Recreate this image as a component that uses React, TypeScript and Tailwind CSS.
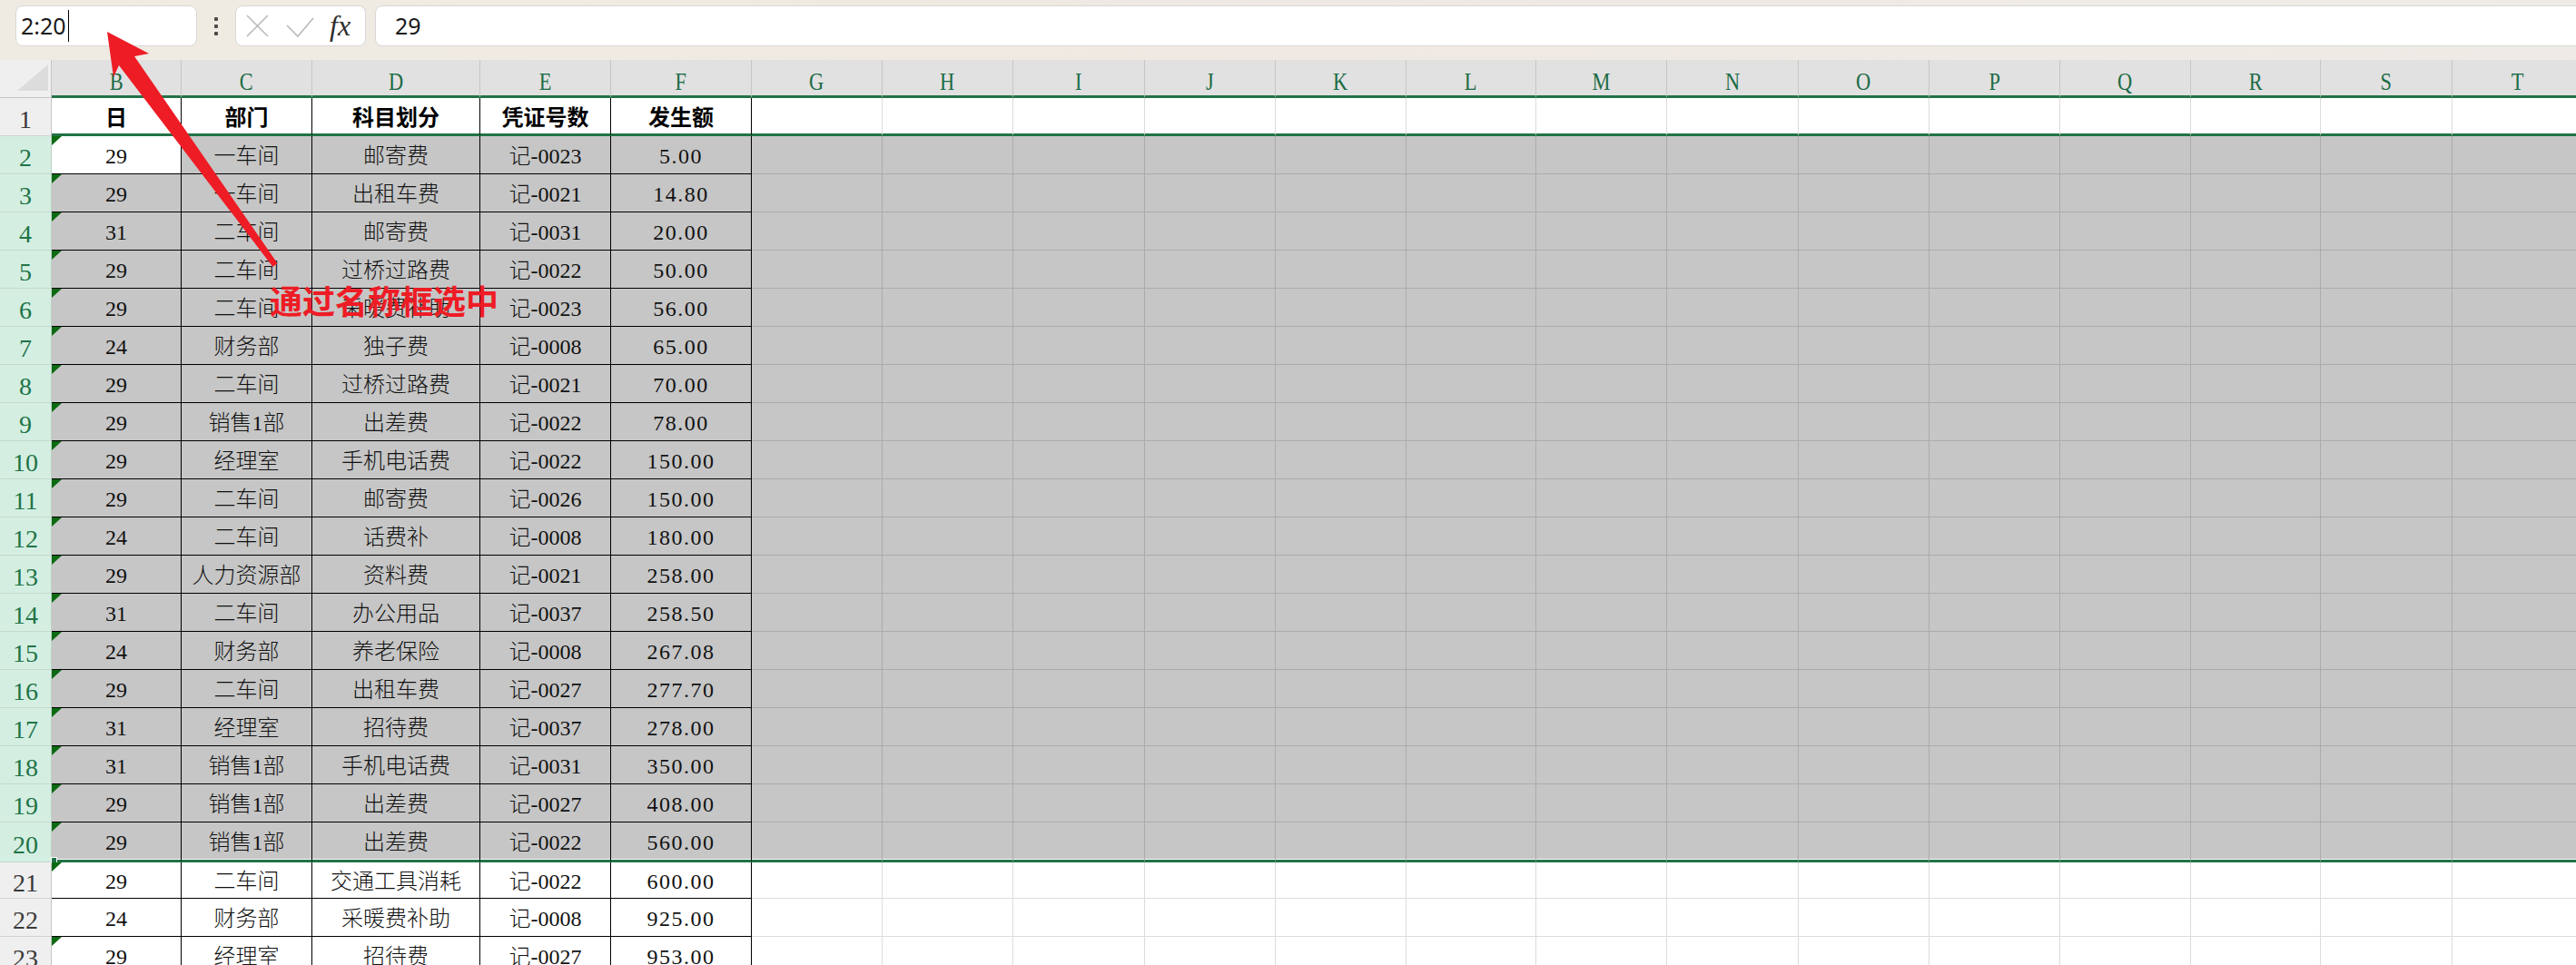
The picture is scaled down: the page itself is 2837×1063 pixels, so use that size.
import React from 'react';

type RowData = [string, string, string, string, string];

const rows: RowData[] = [
  ['29', '一车间', '邮寄费', '记-0023', '5.00'],
  ['29', '一车间', '出租车费', '记-0021', '14.80'],
  ['31', '二车间', '邮寄费', '记-0031', '20.00'],
  ['29', '二车间', '过桥过路费', '记-0022', '50.00'],
  ['29', '二车间', '采暖费补助', '记-0023', '56.00'],
  ['24', '财务部', '独子费', '记-0008', '65.00'],
  ['29', '二车间', '过桥过路费', '记-0021', '70.00'],
  ['29', '销售1部', '出差费', '记-0022', '78.00'],
  ['29', '经理室', '手机电话费', '记-0022', '150.00'],
  ['29', '二车间', '邮寄费', '记-0026', '150.00'],
  ['24', '二车间', '话费补', '记-0008', '180.00'],
  ['29', '人力资源部', '资料费', '记-0021', '258.00'],
  ['31', '二车间', '办公用品', '记-0037', '258.50'],
  ['24', '财务部', '养老保险', '记-0008', '267.08'],
  ['29', '二车间', '出租车费', '记-0027', '277.70'],
  ['31', '经理室', '招待费', '记-0037', '278.00'],
  ['31', '销售1部', '手机电话费', '记-0031', '350.00'],
  ['29', '销售1部', '出差费', '记-0027', '408.00'],
  ['29', '销售1部', '出差费', '记-0022', '560.00'],
  ['29', '二车间', '交通工具消耗', '记-0022', '600.00'],
  ['24', '财务部', '采暖费补助', '记-0008', '925.00'],
  ['29', '经理室', '招待费', '记-0027', '953.00'],
];

const letters = ['B', 'C', 'D', 'E', 'F', 'G', 'H', 'I', 'J', 'K', 'L', 'M', 'N', 'O', 'P', 'Q', 'R', 'S', 'T'];
const emptyCols = 14;

const GRID =
  'grid grid-cols-[57px_143px_144px_185px_144px_155px_144px_144px_145px_144px_144px_143px_144px_145px_144px_144px_144px_143px_145px_145px]';

const SERIF = "font-['Liberation_Serif','Noto_Sans_CJK_SC',serif]";

function Triangle() {
  return (
    <span className="absolute left-0 top-0 w-0 h-0 border-t-[10px] border-t-[#0d6a12] border-r-[11px] border-r-transparent" />
  );
}

function ColumnHeader() {
  return (
    <div className={`${GRID} h-[42px]`}>
      <div className="relative bg-[#efefef] border-r border-r-[#c6c6c6] border-b border-b-[#c6c6c6]">
        <svg className="absolute left-0 top-0" width="57" height="42" viewBox="0 0 57 42">
          <polygon points="53,5 53,34 19,34" fill="#dcdcdc" />
        </svg>
      </div>
      {letters.map((l) => (
        <div
          key={l}
          className={`flex items-center justify-center pt-[8px] bg-[#e1e1e1] border-r border-r-[#c6c6c6] border-b-[3px] border-b-[#217346] text-[#1b6b44] text-[28px] leading-none ${SERIF}`}
        >
          <span className="inline-block scale-x-[0.8]">{l}</span>
        </div>
      ))}
    </div>
  );
}

function HeaderRow() {
  const heads = ['日', '部门', '科目划分', '凭证号数', '发生额'];
  return (
    <div className={`${GRID} h-[42px]`}>
      <div
        className={`flex items-center justify-center pt-[6px] bg-[#efefef] border-r border-r-[#c6c6c6] border-b border-b-[#d2d2d2] text-[#3a3a3a] text-[28px] leading-none ${SERIF}`}
      >
        1
      </div>
      {heads.map((h) => (
        <div
          key={h}
          className={`flex items-center justify-center pt-[4px] bg-white border-r border-r-black border-b-[3px] border-b-[#217346] text-black text-[24px] font-bold leading-none ${SERIF}`}
        >
          {h}
        </div>
      ))}
      {Array.from({ length: emptyCols }).map((_, i) => (
        <div key={i} className="bg-white border-r border-r-[#dcdcdc] border-b-[3px] border-b-[#217346]" />
      ))}
    </div>
  );
}

function DataRow({
  num,
  data,
  selected,
  h,
  last,
}: {
  num: number;
  data: RowData;
  selected: boolean;
  h: string;
  last?: boolean;
}) {
  const showTri = num !== 22;
  const tableBottom = last ? 'border-b-[3px] border-b-[#217346]' : 'border-b border-b-black';
  const emptyBottom = last
    ? 'border-b-[3px] border-b-[#217346]'
    : selected
    ? 'border-b border-b-[#ababab]'
    : 'border-b border-b-[#dcdcdc]';
  return (
    <div className={`${GRID} ${h}`}>
      <div
        className={`flex items-center justify-center pt-[6px] border-r text-[28px] leading-none ${SERIF} ${
          selected
            ? 'bg-[#d4efe2] text-[#217346] border-r-[#bcd3c6] border-b border-b-[#c3d9cc]'
            : 'bg-[#efefef] text-[#3a3a3a] border-r-[#c6c6c6] border-b border-b-[#d2d2d2]'
        }`}
      >
        {num}
      </div>
      {data.map((v, i) => {
        const active = num === 2 && i === 0;
        const bg = selected && !active ? 'bg-[#c6c6c6]' : 'bg-white';
        const textCls = i === 4 ? 'tracking-[1.5px]' : i === 0 ? '' : 'font-light';
        return (
          <div
            key={i}
            className={`relative flex items-center justify-center pt-[3px] border-r border-r-black ${tableBottom} ${bg} text-[24px] leading-none text-[#111] ${SERIF} ${
              last ? 'shadow-[inset_0_-1px_0_#ffffff]' : ''
            }`}
          >
            {i === 0 && showTri && <Triangle />}
            <span className={textCls}>{v}</span>
            {i === 0 && last && (
              <span className="absolute left-[-1px] bottom-[-4px] w-[7px] h-[7px] bg-[#217346] border border-white" />
            )}
          </div>
        );
      })}
      {Array.from({ length: emptyCols }).map((_, i) => (
        <div
          key={i}
          className={`border-r ${selected ? 'bg-[#c6c6c6] border-r-[#ababab]' : 'bg-white border-r-[#dcdcdc]'} ${emptyBottom} ${
            last ? 'shadow-[inset_0_-1px_0_#ffffff]' : ''
          }`}
        />
      ))}
    </div>
  );
}

function Toolbar() {
  return (
    <div className="h-[66px] flex items-start overflow-hidden bg-gradient-to-r from-[#efebe2] via-[#f0e9e3] to-[#eeebe6]">
      <div className="ml-[17px] mt-[6px] w-[200px] h-[45px] shrink-0 rounded-[8px] border border-[#d8d8d8] bg-white flex items-center pl-[5px]">
        <span className="font-['Noto_Sans',sans-serif] text-[25px] text-[#1a1a1a] leading-none">2:20</span>
        <span className="ml-[2px] w-px h-[35px] bg-black" />
      </div>
      <div className="ml-[19px] mt-[19px] flex flex-col gap-[4px] shrink-0">
        <span className="w-[4px] h-[4px] rounded-[1px] bg-[#4a4a4a]" />
        <span className="w-[4px] h-[4px] rounded-[1px] bg-[#4a4a4a]" />
        <span className="w-[4px] h-[4px] rounded-[1px] bg-[#4a4a4a]" />
      </div>
      <div className="ml-[19px] mt-[6px] w-[144px] h-[45px] shrink-0 rounded-[8px] border border-[#d8d8d8] bg-white flex items-center">
        <svg className="ml-[11px]" width="25" height="25" viewBox="0 0 25 25">
          <path d="M1 1 L24 24 M24 1 L1 24" stroke="#b9b9b9" strokeWidth="1.6" fill="none" />
        </svg>
        <svg className="ml-[19px] mt-[2px]" width="31" height="22" viewBox="0 0 31 22">
          <path d="M1 9 L13 21 L30 1" stroke="#b9b9b9" strokeWidth="1.6" fill="none" />
        </svg>
        <span className="ml-[17px] font-['Liberation_Serif',serif] italic text-[32px] leading-none text-[#2e2e2e] mb-[2px]">
          fx
        </span>
      </div>
      <div className="ml-[10px] mr-[-12px] mt-[6px] h-[45px] flex-1 rounded-[8px] border border-[#d8d8d8] bg-white flex items-center pl-[21px]">
        <span className="font-['Noto_Sans',sans-serif] text-[25px] text-[#1a1a1a] leading-none">29</span>
      </div>
    </div>
  );
}

export default function App() {
  return (
    <div className="relative w-[2837px] h-[1063px] overflow-hidden bg-white">
      <Toolbar />
      <ColumnHeader />
      <HeaderRow />
      {rows.map((r, i) => {
        const num = i + 2;
        const selected = num <= 20;
        const h = num === 20 ? 'h-[44px]' : num === 21 ? 'h-[40px]' : 'h-[42px]';
        return <DataRow key={num} num={num} data={r} selected={selected} h={h} last={num === 20} />;
      })}
      <svg className="absolute left-0 top-0 pointer-events-none" width="2837" height="1063" viewBox="0 0 2837 1063">
        <polygon
          points="118,35 164,59 148,62 305.5,290 300.5,294 131,72 125,85"
          fill="#ee1c25"
        />
      </svg>
      <div className="absolute left-[297px] top-[312px] font-['Noto_Sans_CJK_SC',sans-serif] font-bold text-[36px] leading-none text-[#ee1c25] whitespace-nowrap">
        通过名称框选中
      </div>
    </div>
  );
}
